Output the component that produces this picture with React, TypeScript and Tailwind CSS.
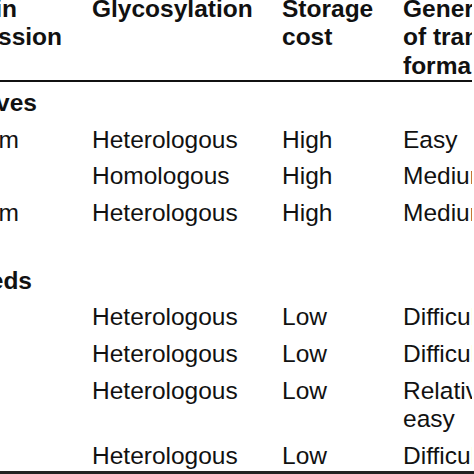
import React from "react";

type Row = {
  source?: string;
  glyco: string;
  storage: string;
  generation: string;
  last?: boolean;
};

const cols = "grid grid-cols-[92px_190px_121px_140px]";

// first column is cut off on the left: right-align the text so it overflows leftwards
function Lead({ end, children }: { end: string; children: React.ReactNode }) {
  return <div className={`flex justify-end whitespace-nowrap ${end}`}>{children}</div>;
}

function DataRow({ row }: { row: Row }) {
  return (
    <div className={`${cols} ${row.last ? "pt-[4.1px]" : "py-[4.1px]"}`}>
      <div>{row.source && <Lead end="w-[19px]">{row.source}</Lead>}</div>
      <div>{row.glyco}</div>
      <div>{row.storage}</div>
      <div>{row.generation}</div>
    </div>
  );
}

const leaves: Row[] = [
  { source: "N. tabacum", glyco: "Heterologous", storage: "High", generation: "Easy" },
  { glyco: "Homologous", storage: "High", generation: "Medium" },
  { source: "N. tabacum", glyco: "Heterologous", storage: "High", generation: "Medium" },
];

const seeds: Row[] = [
  { glyco: "Heterologous", storage: "Low", generation: "Difficult" },
  { glyco: "Heterologous", storage: "Low", generation: "Difficult" },
  { glyco: "Heterologous", storage: "Low", generation: "Relatively easy" },
  { glyco: "Heterologous", storage: "Low", generation: "Difficult", last: true },
];

export default function App() {
  return (
    <div className="w-[474px] h-[474px] bg-white flex flex-col">
      <div className="w-[472px] h-[470.5px] shrink-0 overflow-hidden text-[#111] font-['Liberation_Sans',Arial,sans-serif] text-[24.5px] leading-[28.5px]">
        <div className="-mt-[5.4px] w-max">
          <div className={`${cols} font-bold border-b-2 border-[#111]`}>
            <div>
              <Lead end="w-[62px]">
                <div>
                  Protein
                  <br />
                  expression
                </div>
              </Lead>
            </div>
            <div>Glycosylation</div>
            <div>
              Storage
              <br />
              cost
            </div>
            <div className="whitespace-nowrap">
              Generation
              <br />
              of trans-
              <br />
              formants
            </div>
          </div>

          <div className="pt-[7px] pb-[4px] font-bold">
            <Lead end="w-[37px]">Leaves</Lead>
          </div>
          {leaves.map((r, i) => (
            <DataRow key={`l-${i}`} row={r} />
          ))}

          <div className="pt-[34.9px] pb-[4px] font-bold">
            <Lead end="w-[32px]">Seeds</Lead>
          </div>
          {seeds.map((r, i) => (
            <DataRow key={`s-${i}`} row={r} />
          ))}
        </div>
      </div>
      <div className="h-[3px] w-full shrink-0 bg-[#222]" />
    </div>
  );
}
